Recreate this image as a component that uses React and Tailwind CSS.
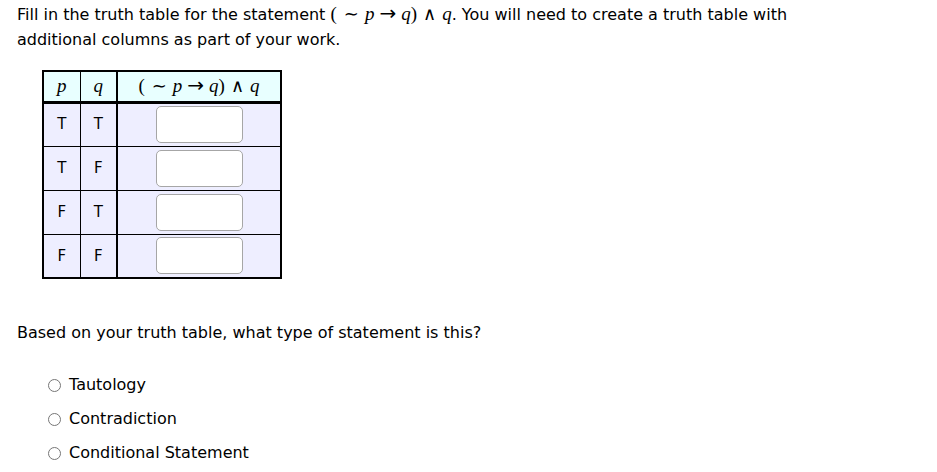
const math = { fontFamily: '"Liberation Serif", "DejaVu Serif", serif' };
const op = { fontFamily: '"DejaVu Sans", sans-serif' };

function MathExpr() {
  return (
    <span style={math} className="text-[19px] leading-none whitespace-nowrap">
      (<span style={op} className="ml-[7px] mr-[6px] text-[18px]">∼</span>
      <i>p</i>
      <span style={op} className="mx-[5px] text-[20px]">→</span>
      <i>q</i>)
      <span style={op} className="mx-[6px] text-[18px]">∧</span>
      <i>q</i>
    </span>
  );
}

const rows = [
  ['T', 'T'],
  ['T', 'F'],
  ['F', 'T'],
  ['F', 'F'],
];

function Radio({ label }) {
  return (
    <label className="flex items-center h-[34px]">
      <span className="w-[13px] h-[13px] rounded-full border border-[#767676] bg-white mr-[8px]" />
      <span>{label}</span>
    </label>
  );
}

export default function App() {
  return (
    <div
      className="w-[937px] h-[472px] bg-white text-black text-[16px] px-[17px] pt-[2px]"
      style={{ fontFamily: '"DejaVu Sans", Verdana, sans-serif' }}
    >
      <p className="leading-[25px] w-[830px]">
        Fill in the truth table for the statement <MathExpr />. You will need to create a truth table with additional
        columns as part of your work.
      </p>

      <table className="ml-[25px] mt-[18px] border-collapse border-2 border-black text-[15px]">
        <thead>
          <tr className="bg-[#e8ffff] h-[30px]">
            <th className="w-[37px] border border-black border-b-[3px] font-normal text-[19px]" style={math}>
              <i>p</i>
            </th>
            <th className="w-[37px] border border-black border-b-[3px] border-r-2 font-normal text-[19px]" style={math}>
              <i>q</i>
            </th>
            <th className="w-[164px] border border-black border-b-[3px] font-normal px-1">
              <MathExpr />
            </th>
          </tr>
        </thead>
        <tbody>
          {rows.map(([p, q], i) => (
            <tr key={i} className="bg-[#eeeeff] h-[44px]">
              <td className="border border-black text-center">{p}</td>
              <td className="border border-black border-r-2 text-center">{q}</td>
              <td className="border border-black">
                <div className="flex justify-center">
                  <div className="w-[87px] h-[37px] bg-white border border-[#a6a6a6] rounded-[5px]" />
                </div>
              </td>
            </tr>
          ))}
        </tbody>
      </table>

      <p className="mt-[44px] leading-[20px]">Based on your truth table, what type of statement is this?</p>

      <div className="mt-[25px] ml-[31px]">
        <Radio label="Tautology" />
        <Radio label="Contradiction" />
        <Radio label="Conditional Statement" />
      </div>
    </div>
  );
}
